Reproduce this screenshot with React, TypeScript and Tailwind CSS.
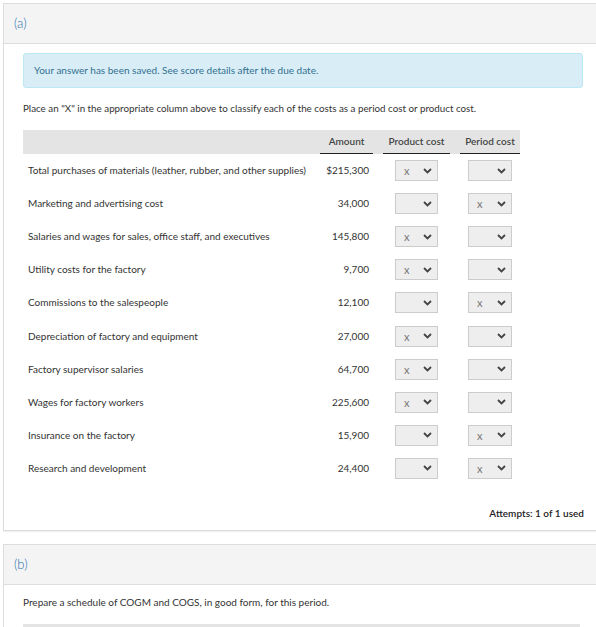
import React from "react";

const rows: { label: string; amount: string; product: boolean; period: boolean }[] = [
  { label: "Total purchases of materials (leather, rubber, and other supplies)", amount: "$215,300", product: true, period: false },
  { label: "Marketing and advertising cost", amount: "34,000", product: false, period: true },
  { label: "Salaries and wages for sales, office staff, and executives", amount: "145,800", product: true, period: false },
  { label: "Utility costs for the factory", amount: "9,700", product: true, period: false },
  { label: "Commissions to the salespeople", amount: "12,100", product: false, period: true },
  { label: "Depreciation of factory and equipment", amount: "27,000", product: true, period: false },
  { label: "Factory supervisor salaries", amount: "64,700", product: true, period: false },
  { label: "Wages for factory workers", amount: "225,600", product: true, period: false },
  { label: "Insurance on the factory", amount: "15,900", product: false, period: true },
  { label: "Research and development", amount: "24,400", product: false, period: true },
];

function Select({ value, w }: { value: boolean; w: string }) {
  return (
    <div className={`${w} h-[21px] bg-[#eeeeee] border border-[#cccccc] flex items-center justify-between pl-[8px] pr-[5px]`}>
      <span className="text-[11px] text-[#777] leading-none">{value ? "x" : ""}</span>
      <svg width="9" height="6" viewBox="0 0 9 6">
        <polyline points="1,1 4.5,4.5 8,1" fill="none" stroke="#444" strokeWidth="1.8" />
      </svg>
    </div>
  );
}

export default function App() {
  return (
    <div className="w-[596px] h-[627px] overflow-hidden bg-white pl-[3px] pt-[3px] text-[#333]" style={{ fontFamily: "Lato, 'Open Sans', sans-serif" }}>
      {/* Card (a) */}
      <div className="w-[600px] border border-[#dddddd] shadow-[0_1px_1px_rgba(0,0,0,0.06)]">
        <div className="h-[40px] bg-[#f4f4f4] border-b border-[#dddddd] flex items-center pl-[10px]">
          <span className="text-[13px] font-light text-[#1f6fb0]">(a)</span>
        </div>
        <div className="px-[19px] pb-[9px]">
          <div className="mt-[9px] h-[35px] w-[560px] bg-[#d9edf7] border border-[#bce8f1] rounded-[3px] flex items-center pl-[10px]">
            <span className="text-[10px] text-[#31708f]">Your answer has been saved. See score details after the due date.</span>
          </div>
          <div className="mt-[13px] text-[9.8px] leading-[14px]">
            Place an "X" in the appropriate column above to classify each of the costs as a period cost or product cost.
          </div>
          <div className="mt-[15px] w-[497px]">
            <div className="grid grid-cols-[287px_53px_67px_60px] gap-x-[10px] h-[24px] bg-[#e4e4e4]">
              <div />
              <div className="border-b-[1.5px] border-[#222] flex items-center justify-center text-[10px] font-semibold text-[#444]">Amount</div>
              <div className="border-b-[1.5px] border-[#222] flex items-center justify-center text-[10px] font-semibold text-[#444]">Product cost</div>
              <div className="border-b-[1.5px] border-[#222] flex items-center justify-center text-[10px] font-semibold text-[#444]">Period cost</div>
            </div>
            {rows.map((r) => (
              <div key={r.label} className="grid grid-cols-[287px_53px_67px_60px] gap-x-[10px] h-[33.1px] items-center">
                <div className="pl-[5px] text-[10px] text-[#333] whitespace-nowrap">{r.label}</div>
                <div className="pr-[4px] text-right text-[10px] text-[#333]">{r.amount}</div>
                <div className="flex justify-center"><Select value={r.product} w="w-[43px]" /></div>
                <div className="flex justify-center"><Select value={r.period} w="w-[44px]" /></div>
              </div>
            ))}
          </div>
          <div className="mt-[21px] w-[561px] text-right text-[10px] font-semibold text-[#222]">Attempts: 1 of 1 used</div>
        </div>
      </div>

      {/* Card (b) */}
      <div className="mt-[13px] w-[600px] border border-[#dddddd]">
        <div className="h-[40px] bg-[#f4f4f4] border-b border-[#dddddd] flex items-center pl-[10px]">
          <span className="text-[13px] font-light text-[#1f6fb0]">(b)</span>
        </div>
        <div className="px-[19px]">
          <div className="mt-[10px] text-[10px] leading-[14px]">Prepare a schedule of COGM and COGS, in good form, for this period.</div>
          <div className="mt-[15px] h-[10px] w-[557px] bg-[#e4e4e4]" />
        </div>
      </div>
    </div>
  );
}
